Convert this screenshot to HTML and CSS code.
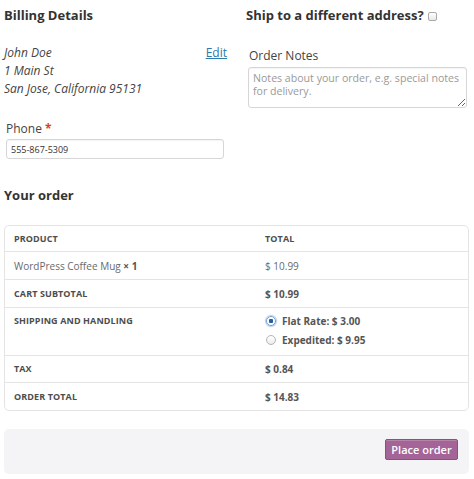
FILE: index.html
```html
<!DOCTYPE html>
<html lang="en">
<head>
<meta charset="utf-8">
<title>Checkout</title>
<link rel="stylesheet" href="styles.css">
</head>
<body>
<div class="page">
  <div class="cols">
    <div class="billing">
      <h3 class="heading">Billing Details</h3>
      <div class="addr">
        <address>John Doe<br>1 Main St<br>San Jose, California 95131</address>
        <a class="edit" href="#">Edit</a>
      </div>
      <label class="field-label" for="phone">Phone <abbr class="req" title="required">*</abbr></label>
      <input class="text-input" id="phone" type="text" value="555-867-5309">
    </div>
    <div class="shipping">
      <h3 class="heading">Ship to a different address? <input class="check" type="checkbox"></h3>
      <label class="field-label notes-label" for="notes">Order Notes</label>
      <textarea class="notes" id="notes" placeholder="Notes about your order, e.g. special notes for delivery."></textarea>
    </div>
  </div>

  <h3 class="heading order-heading">Your order</h3>

  <table class="order">
    <thead>
      <tr class="r-head"><th>Product</th><th>Total</th></tr>
    </thead>
    <tbody>
      <tr class="r-item"><td>WordPress Coffee Mug <strong>× 1</strong></td><td>$ 10.99</td></tr>
    </tbody>
    <tfoot>
      <tr class="r-sub"><th>Cart Subtotal</th><td><strong>$ 10.99</strong></td></tr>
      <tr class="r-ship"><th>Shipping and Handling</th>
        <td>
          <ul class="methods">
            <li><input class="radio" type="radio" name="ship" checked> <span>Flat Rate: $ 3.00</span></li>
            <li><input class="radio" type="radio" name="ship"> <span>Expedited: $ 9.95</span></li>
          </ul>
        </td>
      </tr>
      <tr class="r-tax"><th>Tax</th><td><strong>$ 0.84</strong></td></tr>
      <tr class="r-total"><th>Order Total</th><td><strong>$ 14.83</strong></td></tr>
    </tfoot>
  </table>

  <div class="payment">
    <button class="place" type="button">Place order</button>
  </div>
</div>
</body>
</html>
```

FILE: styles.css
```css
* { box-sizing: border-box; }

body {
  margin: 0;
  font-family: "Open Sans", "Liberation Sans", sans-serif;
  color: #515151;
  background: #fff;
}

.page {
  padding: 6px 5px 0 4px;
}

.cols {
  display: grid;
  grid-template-columns: 222px 1fr;
  column-gap: 20px;
}

.heading {
  margin: 0;
  font-size: 13px;
  line-height: 18px;
  font-weight: 700;
  color: #333;
}

.addr {
  margin-top: 20px;
  display: flex;
  justify-content: space-between;
  align-items: flex-start;
}

address {
  font-style: italic;
  font-size: 12px;
  line-height: 18px;
  color: #444;
}

.edit {
  font-size: 12px;
  line-height: 18px;
  color: #2a7ab0;
  text-decoration: underline;
  margin-right: -1px;
}

.field-label {
  display: block;
  margin-top: 22px;
  padding-left: 2px;
  font-size: 12px;
  line-height: 18px;
  color: #444;
}

.req {
  color: #e2401c;
  font-weight: 700;
  text-decoration: none;
  border: 0;
}

.text-input {
  display: block;
  margin: 1px 0 0 2px;
  width: 218px;
  height: 20px;
  padding: 0 4px;
  font-family: "Open Sans", "Liberation Sans", sans-serif;
  font-size: 9px;
  color: #333;
  border: 1px solid #d6d6d6;
  border-radius: 3px;
  background: #fff;
  box-shadow: inset 0 1px 1px rgba(0,0,0,0.05);
}

.check {
  appearance: none;
  -webkit-appearance: none;
  display: inline-block;
  width: 9px;
  height: 9px;
  margin: 0 0 0 1px;
  vertical-align: -1px;
  border: 1px solid #a9a9a9;
  border-radius: 2px;
  background: linear-gradient(#fff, #e9e9e9);
}

.notes-label {
  margin-top: 23px;
  padding-left: 3px;
}

.notes {
  display: block;
  margin: 2px 0 0 2px;
  width: 219px;
  height: 41px;
  padding: 4px 2px 3px 4px;
  resize: vertical;
  font-family: "Open Sans", "Liberation Sans", sans-serif;
  font-size: 10.6px;
  line-height: 13px;
  color: #333;
  border: 1px solid #d6d6d6;
  border-radius: 3px;
  box-shadow: inset 0 1px 1px rgba(0,0,0,0.05);
}

.notes::placeholder { color: #9a9a9a; }

.order-heading {
  margin-top: 27px;
}

.order {
  margin-top: 21px;
  width: 465px;
  border-collapse: separate;
  border-spacing: 0;
  border: 1px solid #e4e4e4;
  border-radius: 5px;
  font-size: 10px;
}

.order th,
.order td {
  text-align: left;
  padding: 0 9px;
  vertical-align: middle;
  border-top: 1px solid #e4e4e4;
  line-height: 14px;
}

.order th:first-child,
.order td:first-child { width: 251px; }

.order thead th {
  border-top: 0;
  height: 25px;
}

.order th {
  font-size: 9px;
  font-weight: 700;
  text-transform: uppercase;
  color: #4d4d4d;
  letter-spacing: 0.1px;
}

.order td { color: #6a6a6a; }
.order td strong { color: #555; font-weight: 700; }

.r-item td, .r-sub th, .r-sub td, .r-total th, .r-total td { height: 28px; }
.r-tax th, .r-tax td { height: 27px; }

.r-ship th, .r-ship td {
  height: 48px;
  vertical-align: top;
}

.r-ship th { padding-top: 6px; }
.r-ship td { padding-top: 3px; }

.methods {
  list-style: none;
  margin: 0;
  padding: 0;
}

.methods li {
  display: flex;
  align-items: center;
  gap: 6px;
  height: 19px;
  padding-left: 1px;
  font-weight: 700;
  color: #555;
}

.radio {
  appearance: none;
  -webkit-appearance: none;
  width: 10px;
  height: 10px;
  margin: 0;
  border: 1px solid #b4b4b4;
  border-radius: 50%;
  background: linear-gradient(#fff, #ececec);
  flex: none;
}

.radio:checked {
  border-color: #6fa1d6;
  box-shadow: 0 0 1px 1px rgba(91,157,217,0.5);
  background: radial-gradient(circle, #2c5c99 0 2px, #fff 2.5px);
}

.payment {
  margin-top: 18px;
  width: 465px;
  height: 45px;
  padding: 10px 11px 0 0;
  background: #f4f3f5;
  border-radius: 5px;
  display: flex;
  justify-content: flex-end;
  align-items: flex-start;
}

.place {
  width: 73px;
  height: 21px;
  padding: 0;
  font-family: "Open Sans", "Liberation Sans", sans-serif;
  font-size: 11px;
  font-weight: 600;
  color: #fff;
  background: #a46497;
  border: 1px solid #8c4f80;
  border-radius: 2px;
  box-shadow: inset 0 1px 0 rgba(255,255,255,0.2);
}
```
